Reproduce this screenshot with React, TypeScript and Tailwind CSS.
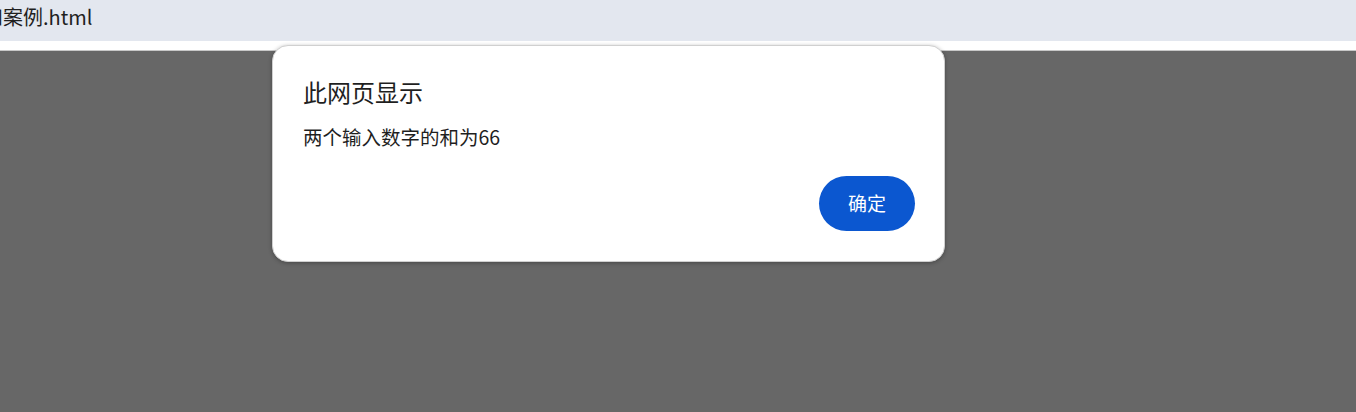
import React from "react";

const font = { fontFamily: '"Noto Sans CJK SC", "Noto Sans", sans-serif' };

const AlertDialog: React.FC<{ message: string }> = ({ message }) => (
  <div className="absolute left-[272px] top-[45px] w-[673px] h-[217px] rounded-[16px] bg-white border border-[#d0d0d0] shadow-[0_1px_4px_rgba(0,0,0,0.3)] flex flex-col px-[30px] pt-[30px]">
    <h2 className="text-[24px] leading-[32px] text-[#1f1f1f]">此网页显示</h2>
    <p className="mt-[16px] text-[19.5px] leading-[26px] text-[#1f1f1f]">{message}</p>
    <div className="flex justify-end mt-[26px] -mr-[1px]">
      <button className="w-[96px] h-[55px] rounded-full bg-[#0b57d0] text-white text-[19px]">确定</button>
    </div>
  </div>
);

export default function App() {
  return (
    <div className="relative w-[1356px] h-[412px] overflow-hidden bg-[#676767]" style={font}>
      <div className="h-[41px] bg-[#e3e7ef] overflow-hidden whitespace-nowrap">
        <span className="block -ml-[17px] text-[20px] leading-[34px] text-[#1f1f1f]">和案例.html</span>
      </div>
      <div className="h-[9px] bg-white" />
      <div className="h-px bg-[#c8c8c8]" />
      <AlertDialog message="两个输入数字的和为66" />
    </div>
  );
}
